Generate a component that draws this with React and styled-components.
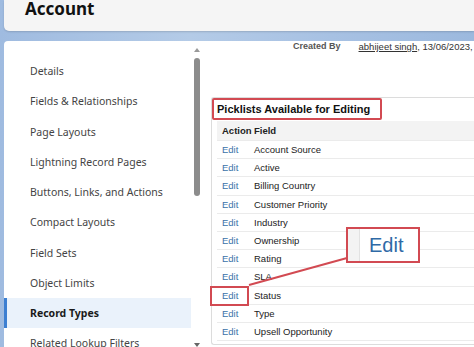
import React from "react";
import styled, { createGlobalStyle } from "styled-components";

const Global = createGlobalStyle`
  html, body { margin: 0; padding: 0; }
  body {
    width: 474px;
    height: 347px;
    overflow: hidden;
    background: #a9c3e2;
  }
`;

const Page = styled.div`
  width: 474px;
  height: 347px;
  display: flex;
  flex-direction: column;
  padding-left: 4px;
  box-sizing: border-box;
  background: linear-gradient(90deg, #9fbbe0 0%, #b4cbe7 40%, #a7c1e3 70%, #9cb9de 100%);
  overflow: hidden;
`;

const Header = styled.div`
  height: 31px;
  flex: none;
  background: #f5f5f5;
  border-radius: 0 0 0 5px;
  box-shadow: 0 1px 2px rgba(0, 0, 0, 0.15);
  padding-left: 21px;
  box-sizing: border-box;
`;

const Title = styled.div`
  font-family: "Noto Sans", "Open Sans", sans-serif;
  font-weight: 700;
  font-size: 17px;
  line-height: 17px;
  color: #111;
`;

const Panel = styled.div`
  margin-top: 10px;
  flex: 1;
  display: flex;
  background: #fff;
  border-radius: 4px 0 0 0;
  overflow: hidden;
`;

const Sidebar = styled.ul`
  list-style: none;
  margin: 0;
  padding: 15px 0 0 0;
  width: 187px;
  flex: none;
`;

const NavItem = styled.li`
  height: 30.25px;
  display: flex;
  align-items: center;
  padding-left: 26px;
  font-family: "Noto Sans", "Open Sans", sans-serif;
  font-size: 10.5px;
  color: ${(p) => (p.$active ? "#1a1a1a" : "#444")};
  font-weight: ${(p) => (p.$active ? 700 : 400)};
  background: ${(p) => (p.$active ? "#eaf2fb" : "transparent")};
  box-shadow: ${(p) => (p.$active ? "inset 3px 0 0 #3d7fd1" : "none")};
  white-space: nowrap;
`;

const Scrollbar = styled.div`
  width: 12px;
  flex: none;
  display: flex;
  flex-direction: column;
  align-items: center;
  padding-top: 7px;
  box-sizing: border-box;
`;

const Arrow = styled.div`
  width: 0;
  height: 0;
  border-left: 3px solid transparent;
  border-right: 3px solid transparent;
  ${(p) =>
    p.$down
      ? "border-top: 4px solid #666; margin-top: auto; margin-bottom: 0;"
      : "border-bottom: 4px solid #999;"}
`;

const Thumb = styled.div`
  margin-top: 6px;
  width: 6px;
  height: 138px;
  border-radius: 3px;
  background: #8c8c8c;
`;

const Main = styled.div`
  flex: 1;
  position: relative;
  min-width: 0;
  font-family: "Liberation Sans", Arial, sans-serif;
`;

const Meta = styled.div`
  display: flex;
  gap: 18px;
  padding-left: 90px;
  font-size: 9px;
  line-height: 11px;
  white-space: nowrap;
`;

const MetaLabel = styled.span`
  font-weight: 700;
  color: #555;
`;

const MetaValue = styled.span`
  color: #333;
  font-size: 9.5px;
`;

const UserLink = styled.span`
  text-decoration: underline;
`;

const Section = styled.div`
  margin: 45px 0 0 8px;
  border: 1px solid #dcdcdc;
  border-right: none;
  border-radius: 3px 0 0 3px;
  height: 248px;
  box-sizing: border-box;
`;

const SectionTitle = styled.div`
  display: inline-block;
  border: 2px solid #d24a52;
  border-radius: 2px;
  padding: 0 10px 0 3px;
  height: 22px;
  line-height: 18px;
  box-sizing: border-box;
  font-size: 11px;
  font-weight: 700;
  color: #111;
`;

const Table = styled.div`
  margin: 1px 0 0 5px;
  font-size: 9.5px;
`;

const Row = styled.div`
  display: flex;
  align-items: center;
  height: ${(p) => (p.$head ? "20px" : "18.2px")};
  background: ${(p) => (p.$head ? "#f3f3f3" : "#fff")};
  border-bottom: 1px solid #ebebeb;
  box-sizing: border-box;
  font-weight: ${(p) => (p.$head ? 700 : 400)};
  color: #222;
`;

const ActionCell = styled.div`
  width: 37px;
  flex: none;
  padding-left: 5px;
  box-sizing: border-box;
  position: relative;
  color: ${(p) => (p.$link ? "#3a72a8" : "#222")};
  ${(p) =>
    p.$highlight &&
    `
    &::after {
      content: "";
      position: absolute;
      left: -7px;
      right: 5px;
      top: -4px;
      bottom: -5px;
      border: 2px solid #d24a52;
    }
  `}
`;

const FieldCell = styled.div`
  flex: 1;
  white-space: nowrap;
`;

const Callout = styled.div`
  position: absolute;
  left: 143px;
  top: 186px;
  width: 74px;
  height: 36px;
  box-sizing: border-box;
  border: 2px solid #d24a52;
  background: #fff;
  display: flex;
`;

const CalloutGutter = styled.div`
  width: 11px;
  background: #f3f3f3;
  border-right: 1px solid #e2e2e2;
`;

const CalloutText = styled.div`
  padding-left: 9px;
  font-size: 20px;
  line-height: 32px;
  color: #2f6aa6;
`;

const Connector = styled.svg`
  position: absolute;
  left: 0;
  top: 0;
  width: 271px;
  height: 306px;
  pointer-events: none;
`;

const navItems = [
  "Details",
  "Fields & Relationships",
  "Page Layouts",
  "Lightning Record Pages",
  "Buttons, Links, and Actions",
  "Compact Layouts",
  "Field Sets",
  "Object Limits",
  "Record Types",
  "Related Lookup Filters",
];

const fields = [
  "Account Source",
  "Active",
  "Billing Country",
  "Customer Priority",
  "Industry",
  "Ownership",
  "Rating",
  "SLA",
  "Status",
  "Type",
  "Upsell Opportunity",
];

export default function App() {
  return (
    <>
      <Global />
      <Page>
        <Header>
          <Title>Account</Title>
        </Header>
        <Panel>
          <Sidebar>
            {navItems.map((n) => (
              <NavItem key={n} $active={n === "Record Types"}>
                {n}
              </NavItem>
            ))}
          </Sidebar>
          <Scrollbar>
            <Arrow />
            <Thumb />
            <Arrow $down />
          </Scrollbar>
          <Main>
            <Meta>
              <MetaLabel>Created By</MetaLabel>
              <MetaValue>
                <UserLink>abhijeet singh</UserLink>, 13/06/2023, 3:15 pm
              </MetaValue>
            </Meta>
            <Section>
              <SectionTitle>Picklists Available for Editing</SectionTitle>
              <Table>
                <Row $head>
                  <ActionCell>Action</ActionCell>
                  <FieldCell>Field</FieldCell>
                </Row>
                {fields.map((f) => (
                  <Row key={f}>
                    <ActionCell $link $highlight={f === "Status"}>
                      Edit
                    </ActionCell>
                    <FieldCell>{f}</FieldCell>
                  </Row>
                ))}
              </Table>
            </Section>
            <Connector viewBox="0 0 271 306">
              <line x1="46" y1="244" x2="144" y2="217" stroke="#d24a52" strokeWidth="2" />
            </Connector>
            <Callout>
              <CalloutGutter />
              <CalloutText>Edit</CalloutText>
            </Callout>
          </Main>
        </Panel>
      </Page>
    </>
  );
}
